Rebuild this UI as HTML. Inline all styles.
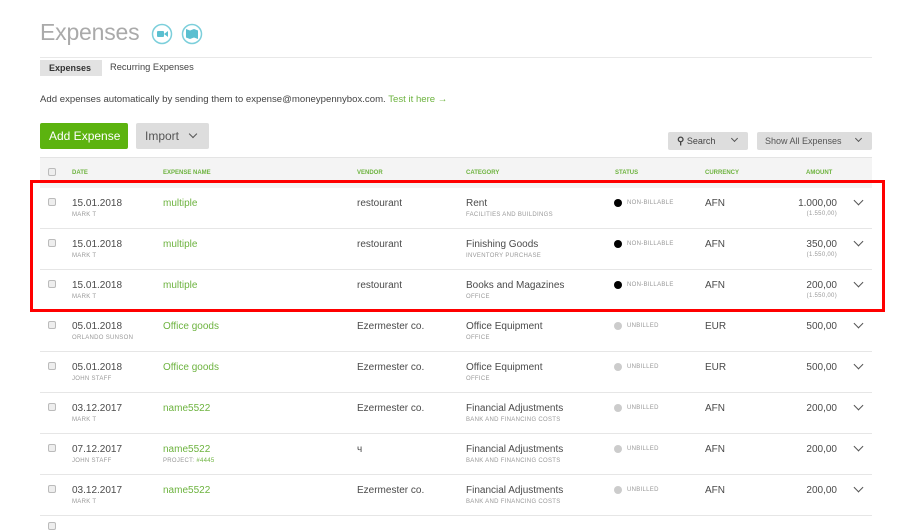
<!DOCTYPE html>
<html><head><meta charset="utf-8"><style>
*{margin:0;padding:0;box-sizing:border-box}
body{width:920px;height:526px;overflow:hidden;background:#fff;font-family:"Liberation Sans",sans-serif;color:#444;position:relative}
.a{position:absolute;white-space:nowrap}
.t{font-size:10px;color:#4a4a4a}
.sub{font-size:6px;color:#999;letter-spacing:.3px}
.g{color:#6db33f}
.cb{position:absolute;width:8px;height:8px;border:1px solid #bbb;border-radius:2px;background:#eee}
.hl{position:absolute;left:40px;width:832px;height:1px;background:#e6e6e6}
.hd{font-size:6px;font-weight:bold;color:#6db33f;top:170px}
.chev{position:absolute;width:7px;height:7px;border-right:1.5px solid #555;border-bottom:1.5px solid #555;transform:rotate(45deg)}
.dot{position:absolute;width:8px;height:8px;border-radius:50%}
</style></head><body>
<div class="a" style="left:40px;top:19px;font-size:23px;color:#aaa;letter-spacing:-0.2px">Expenses</div>
<svg class="a" style="left:151px;top:23px" width="54" height="22">
<circle cx="11" cy="11" r="9.5" fill="none" stroke="#7ccfdb" stroke-width="1.5"/>
<rect x="6" y="8" width="7" height="6" rx="1" fill="#5bbfd0"/><path d="M13 11 L17 8 L17 14Z" fill="#5bbfd0"/>
<circle cx="41" cy="11" r="9.5" fill="none" stroke="#7ccfdb" stroke-width="1.5"/>
<path d="M35 6 L39 7.5 L43 6 L47 7.5 L47 16 L43 14.5 L39 16 L35 14.5Z" fill="#5bbfd0"/>
</svg>
<div class="a" style="left:40px;top:57px;width:832px;height:1px;background:#e8e8e8"></div>
<div class="a" style="left:40px;top:60px;width:62px;height:16px;background:#e2e2e2;font-size:9px;font-weight:bold;padding:3px 0 0 9px;color:#333">Expenses</div>
<div class="a" style="left:110px;top:62px;font-size:9.3px;color:#444">Recurring Expenses</div>
<div class="a" style="left:40px;top:94px;font-size:9.6px;color:#444">Add expenses automatically by sending them to expense@moneypennybox.com. <span class="g">Test it here →</span></div>
<div class="a" style="left:40px;top:123px;width:88px;height:26px;background:#5cb30f;border-radius:2px;color:#fff;font-size:12px;padding:6px 0 0 9px">Add Expense</div>
<div class="a" style="left:136px;top:123px;width:73px;height:26px;background:#ddd;border-radius:2px;color:#555;font-size:12px;padding:6px 0 0 9px">Import</div>
<div class="chev" style="left:190px;top:131px;width:6px;height:6px"></div>
<div class="a" style="left:668px;top:132px;width:80px;height:18px;background:#ddd;border-radius:2px;font-size:9px;padding:4px 0 0 9px;color:#444"><b style="font-size:10px">&#9906;</b> Search</div>
<div class="chev" style="left:732px;top:136px;width:5px;height:5px"></div>
<div class="a" style="left:757px;top:132px;width:115px;height:18px;background:#ddd;border-radius:2px;font-size:9px;padding:4px 0 0 8px;color:#555">Show All Expenses</div>
<div class="chev" style="left:856px;top:136px;width:5px;height:5px"></div>
<div class="a" style="left:40px;top:157px;width:832px;height:31px;background:#f4f4f4;border-top:1px solid #e4e4e4"></div>
<div class="cb" style="left:48px;top:168px"></div>
<div class="a hd" style="left:72px">DATE</div>
<div class="a hd" style="left:163px">EXPENSE NAME</div>
<div class="a hd" style="left:357px">VENDOR</div>
<div class="a hd" style="left:466px">CATEGORY</div>
<div class="a hd" style="left:615px">STATUS</div>
<div class="a hd" style="left:705px">CURRENCY</div>
<div class="a hd" style="left:806px">AMOUNT</div>
<div id="rows"></div>
<script>
var R=[
["15.01.2018","MARK T","multiple","","restourant","Rent","FACILITIES AND BUILDINGS",1,"AFN","1.000,00",1],
["15.01.2018","MARK T","multiple","","restourant","Finishing Goods","INVENTORY PURCHASE",1,"AFN","350,00",1],
["15.01.2018","MARK T","multiple","","restourant","Books and Magazines","OFFICE",1,"AFN","200,00",1],
["05.01.2018","ORLANDO SUNSON","Office goods","","Ezermester co.","Office Equipment","OFFICE",0,"EUR","500,00",0],
["05.01.2018","JOHN STAFF","Office goods","","Ezermester co.","Office Equipment","OFFICE",0,"EUR","500,00",0],
["03.12.2017","MARK T","name5522","","Ezermester co.","Financial Adjustments","BANK AND FINANCING COSTS",0,"AFN","200,00",0],
["07.12.2017","JOHN STAFF","name5522","PROJECT: <span class='g'>#4445</span>","ч","Financial Adjustments","BANK AND FINANCING COSTS",0,"AFN","200,00",0],
["03.12.2017","MARK T","name5522","","Ezermester co.","Financial Adjustments","BANK AND FINANCING COSTS",0,"AFN","200,00",0]];
var h="";
R.forEach(function(r,i){var y=188+41*i;
h+='<div class="hl" style="top:'+(y+40)+'px"></div>';
h+='<div class="cb" style="left:48px;top:'+(y+10)+'px"></div>';
h+='<div class="a t" style="left:72px;top:'+(y+10)+'px">'+r[0]+'</div>';
h+='<div class="a sub" style="left:72px;top:'+(y+24)+'px">'+r[1]+'</div>';
h+='<div class="a t g" style="left:163px;top:'+(y+10)+'px">'+r[2]+'</div>';
if(r[3])h+='<div class="a sub" style="left:163px;top:'+(y+24)+'px">'+r[3]+'</div>';
h+='<div class="a t" style="left:357px;top:'+(y+10)+'px">'+r[4]+'</div>';
h+='<div class="a t" style="left:466px;top:'+(y+10)+'px">'+r[5]+'</div>';
h+='<div class="a sub" style="left:466px;top:'+(y+24)+'px">'+r[6]+'</div>';
h+='<div class="dot" style="left:614px;top:'+(y+11)+'px;background:'+(r[7]?'#000':'#ccc')+'"></div>';
h+='<div class="a sub" style="left:627px;top:'+(y+12)+'px">'+(r[7]?'NON-BILLABLE':'UNBILLED')+'</div>';
h+='<div class="a t" style="left:705px;top:'+(y+10)+'px">'+r[8]+'</div>';
h+='<div class="a t" style="right:83px;top:'+(y+10)+'px">'+r[9]+'</div>';
if(r[10])h+='<div class="a sub" style="right:83px;top:'+(y+23)+'px">(1.550,00)</div>';
h+='<div class="chev" style="left:855px;top:'+(y+9)+'px"></div>';
});
h+='<div class="cb" style="left:48px;top:522px"></div>';
document.getElementById("rows").innerHTML=h;
</script>
<div class="a" style="left:30px;top:180px;width:855px;height:132px;border:3px solid #f00"></div>
</body></html>
